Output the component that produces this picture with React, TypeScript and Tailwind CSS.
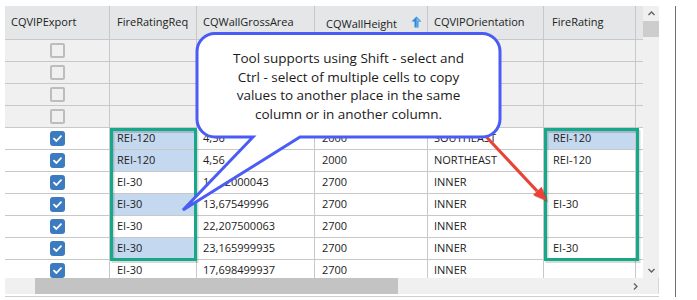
import React from "react";

type Row = {
  checked: boolean;
  req: string;
  reqSel?: boolean;
  area: string;
  height: string;
  orient: string;
  fire: string;
  fireSel?: boolean;
};

const blank: Row = { checked: false, req: "", area: "", height: "", orient: "", fire: "" };

const rows: Row[] = [
  blank,
  blank,
  blank,
  blank,
  { checked: true, req: "REI-120", reqSel: true, area: "4,56", height: "2000", orient: "SOUTHEAST", fire: "REI-120", fireSel: true },
  { checked: true, req: "REI-120", reqSel: true, area: "4,56", height: "2000", orient: "NORTHEAST", fire: "REI-120" },
  { checked: true, req: "EI-30", area: "11,32000043", height: "2700", orient: "INNER", fire: "" },
  { checked: true, req: "EI-30", reqSel: true, area: "13,67549996", height: "2700", orient: "INNER", fire: "EI-30" },
  { checked: true, req: "EI-30", area: "22,207500063", height: "2700", orient: "INNER", fire: "" },
  { checked: true, req: "EI-30", reqSel: true, area: "23,165999935", height: "2700", orient: "INNER", fire: "EI-30" },
  { checked: true, req: "EI-30", area: "17,698499937", height: "2700", orient: "INNER", fire: "" },
];

function Check({ on }: { on: boolean }) {
  if (!on) {
    return <div className="w-[15px] h-[15px] rounded-[2px] border-2 border-[#bdbdbd]" />;
  }
  return (
    <div className="w-[15px] h-[15px] rounded-[3px] bg-[#3c7bc0] flex items-center justify-center">
      <svg width="9" height="7" viewBox="0 0 9 7">
        <path d="M1 3.6 L3.4 6 L8 1.2" stroke="white" strokeWidth="1.8" fill="none" strokeLinecap="round" strokeLinejoin="round" />
      </svg>
    </div>
  );
}

function Cell({ w, children, sel, className = "" }: { w: string; children?: React.ReactNode; sel?: boolean; className?: string }) {
  return (
    <div className={`${w} shrink-0 h-full border-r border-[#c8c8c8] flex items-center whitespace-nowrap overflow-hidden ${sel ? "bg-[#c4d8ef]" : ""} ${className}`}>
      {children}
    </div>
  );
}

function Chevron({ d }: { d: string }) {
  return (
    <svg width="9" height="9" viewBox="0 0 9 9">
      <path d={d} stroke="#606060" strokeWidth="1.3" fill="none" />
    </svg>
  );
}

export default function App() {
  return (
    <div className="relative w-[697px] h-[300px] bg-white overflow-hidden font-['Open_Sans',sans-serif] text-[11px] text-[#222]">
      <div className="flex pt-[6px] pl-[5px]">
        <div className="w-[654px] flex flex-col border-b border-[#cfcfcf]">
          <div className="flex h-[272px]">
            {/* grid */}
            <div className="w-[638px] h-full overflow-hidden flex flex-col">
              <div className="flex h-[34px] shrink-0 bg-[#e4e6e7] border-b border-[#c8c8c8]">
                <Cell w="w-[105px]" className="pl-[6px]">CQVIPExport</Cell>
                <Cell w="w-[87px]" className="pl-[7px]">FireRatingReq</Cell>
                <Cell w="w-[118px]" className="pl-[6px]">CQWallGrossArea</Cell>
                <Cell w="w-[113px]" className="pl-[11px] pt-[4px] justify-between pr-[5px]">
                  <span>CQWallHeight</span>
                  <svg width="11" height="12" viewBox="0 0 11 12" className="-mt-[6px]">
                    <path d="M5.5 0.5 L10.5 5.5 L7.5 5.5 L7.5 11.5 L3.5 11.5 L3.5 5.5 L0.5 5.5 Z" fill="#2f88d8" />
                    <path d="M5.5 1.5 L9 5 L6.5 5 L6.5 11 L5.5 11 Z" fill="#7cc0f2" />
                  </svg>
                </Cell>
                <Cell w="w-[116px]" className="pl-[6px]">CQVIPOrientation</Cell>
                <Cell w="w-[92px]" className="pl-[8px]">FireRating</Cell>
                <div className="w-[7px]" />
              </div>
              {rows.map((r, i) => (
                <div key={i} className={`flex h-[22px] shrink-0 border-b border-[#c8c8c8] ${r.checked ? "bg-white" : "bg-[#f0f0f0]"}`}>
                  <Cell w="w-[105px]" className="justify-center">
                    <Check on={r.checked} />
                  </Cell>
                  <Cell w="w-[87px]" sel={r.reqSel} className="pl-[7px]">{r.req}</Cell>
                  <Cell w="w-[118px]" className="pl-[6px]">{r.area}</Cell>
                  <Cell w="w-[113px]" className="pl-[7px]">{r.height}</Cell>
                  <Cell w="w-[116px]" className="pl-[6px]">{r.orient}</Cell>
                  <Cell w="w-[92px]" sel={r.fireSel} className="pl-[9px]">{r.fire}</Cell>
                  <div className="w-[7px]" />
                </div>
              ))}
            </div>
            {/* vertical scrollbar */}
            <div className="w-[16px] h-full bg-[#f0f0f0] flex flex-col items-center">
              <div className="h-[15px] flex items-center justify-center">
                <Chevron d="M1.5 6 L4.5 3 L7.5 6" />
              </div>
              <div className="w-full h-[16px] bg-[#cdcdcd]" />
              <div className="flex-1" />
              <div className="h-[15px] flex items-center justify-center">
                <Chevron d="M1.5 3 L4.5 6 L7.5 3" />
              </div>
            </div>
          </div>
          {/* horizontal scrollbar */}
          <div className="flex h-[16px] bg-[#f0f0f0]">
            <div className="w-[30px]" />
            <div className="w-[363px] h-full bg-[#c3c3c3]" />
            <div className="flex-1" />
            <div className="w-[16px] flex items-center justify-center">
              <Chevron d="M3 1.5 L6 4.5 L3 7.5" />
            </div>
            <div className="w-[16px] border-r border-[#d6d6d6]" />
          </div>
        </div>
        <div className="w-[17px] h-[291px] border-r border-[#6e6e6e]" />
      </div>

      {/* annotations drawn over the grid */}
      <svg className="absolute inset-0" width="697" height="300" viewBox="0 0 697 300">
        <rect x="113" y="131.5" width="84" height="130" fill="none" stroke="#000" strokeOpacity="0.15" strokeWidth="3" />
        <rect x="111.5" y="129.5" width="84" height="130" fill="none" stroke="#15a98a" strokeWidth="3" />
        <rect x="547" y="131.5" width="92" height="130" fill="none" stroke="#000" strokeOpacity="0.15" strokeWidth="3" />
        <rect x="545.5" y="129.5" width="92" height="130" fill="none" stroke="#15a98a" strokeWidth="3" />

        <g transform="translate(1.5 1.5)" opacity="0.2">
          <line x1="478" y1="128" x2="537" y2="191" stroke="#000" strokeWidth="3" />
          <polygon points="547,201 533,195 541.6,186.8" fill="#000" />
        </g>
        <line x1="478" y1="128" x2="537" y2="191" stroke="#ea4335" strokeWidth="3" />
        <polygon points="547,201 533,195 541.6,186.8" fill="#ea4335" />

        <path
          d="M215 33.5 H482 A18 18 0 0 1 500 51.5 V119 A18 18 0 0 1 482 137 H300 L183 210 L253 137 H215 A18 18 0 0 1 197 119 V51.5 A18 18 0 0 1 215 33.5 Z"
          fill="white"
          stroke="#4a5cf5"
          strokeWidth="3"
          strokeLinejoin="miter"
        />
      </svg>

      <div className="absolute left-[197px] top-[49px] w-[303px] text-center text-[13.5px] leading-[18.5px] text-[#1a1a1a] font-['Open_Sans',sans-serif]">
        <div>Tool supports using Shift - select and</div>
        <div>Ctrl - select of multiple cells to copy</div>
        <div>values to another place in the same</div>
        <div>column or in another column.</div>
      </div>
    </div>
  );
}
